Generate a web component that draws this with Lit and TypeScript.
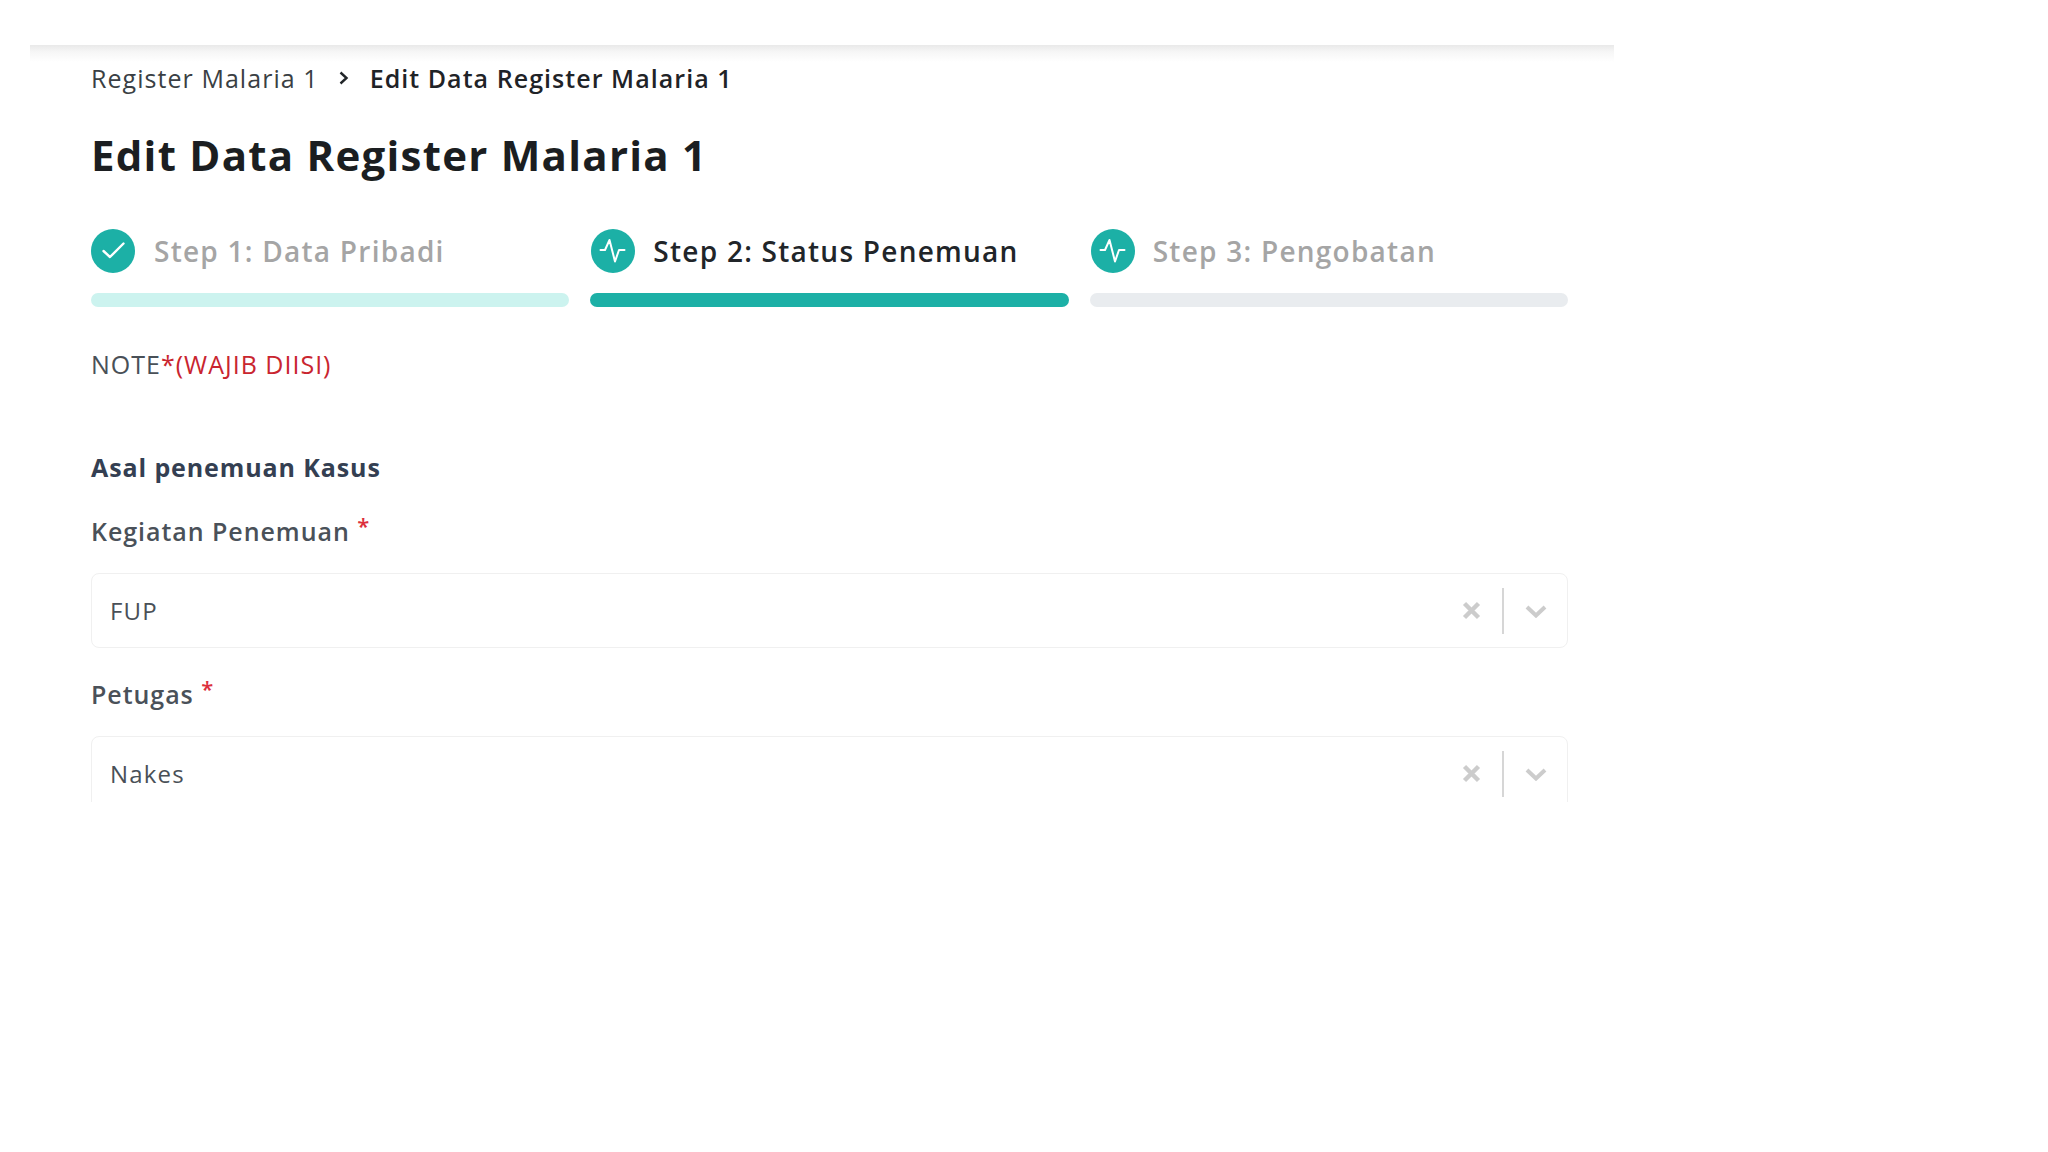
import { LitElement, html, css, svg } from "lit";
import { customElement } from "lit/decorators.js";

const check = svg`<path d="M-9.5 0 L-3 6 L10.5 -7.5" fill="none" stroke="#fff" stroke-width="2.4" stroke-linecap="round" stroke-linejoin="round"/>`;
const pulse = svg`<path d="M-12.5 -1 H-8 L-3.5 -11 L2 10.5 L6 -1 H11.5" fill="none" stroke="#fff" stroke-width="2" stroke-linecap="round" stroke-linejoin="round"/>`;

@customElement("app-root")
export class AppRoot extends LitElement {
  static styles = css`
    :host { display: block; width: 2048px; height: 1152px; background: #fff; font-family: "Open Sans", sans-serif; overflow: hidden; }
    .card { box-sizing: border-box; width: 1584px; height: 757px; margin: 45px 0 0 30px; padding: 16px 46px 0 61px; overflow: hidden;
      background: linear-gradient(#e9e9e9, #f6f6f6 40%, #ffffff) no-repeat top left / 100% 17px; }
    .crumbs { display: flex; align-items: center; height: 34px; font-size: 25px; letter-spacing: 1.05px; color: #3a3f44; }
    .crumbs svg { margin: 0 20px 0 19px; }
    .crumbs b { font-weight: 600; color: #1f2327; }
    h1 { margin: 30px 0 0; font-size: 42px; line-height: 60px; font-weight: 700; letter-spacing: 1.25px; color: #1b1e21; }
    .steps { display: grid; grid-template-columns: repeat(3, 1fr); column-gap: 21px; margin-top: 44px; }
    .step { display: flex; flex-direction: column; }
    .head { display: flex; align-items: center; height: 44px; gap: 19px; font-size: 28px; font-weight: 600; letter-spacing: 1.25px; color: #a5a5a5; }
    .head.on { color: #212529; }
    .step:nth-child(2) .head { gap: 18px; }
    .step:nth-child(2) .dot { margin-left: 1px; }
    .step:nth-child(3) .head { gap: 18px; }
    .step:nth-child(3) .dot { margin-left: 1px; }
    .dot { flex: none; width: 44px; height: 44px; border-radius: 50%; background: #1cb0a6; }
    .dot svg { display: block; }
    .bar { height: 14px; margin-top: 20px; border-radius: 7px; background: #ccf3ef; }
    .bar.on { background: #1cb0a6; }
    .bar.off { background: #e9ecef; }
    .note { margin-top: 39px; font-size: 25px; line-height: 36px; letter-spacing: 1px; color: #495057; }
    .note span { color: #c9252f; }
    h2 { margin: 67px 0 0; font-size: 25px; line-height: 36px; font-weight: 700; letter-spacing: 0.9px; color: #343f52; }
    label { display: block; font-size: 25px; line-height: 36px; font-weight: 600; letter-spacing: 0.95px; color: #4a5159; }
    label.first { margin-top: 28px; }
    label.next { margin-top: 28px; }
    label i { position: relative; top: -7px; font-style: normal; font-size: 22px; line-height: 0; color: #dc2f3c; }
    .select { box-sizing: border-box; display: flex; align-items: center; height: 75px; margin-top: 24px; padding: 0 20px 0 18px; border: 1.5px solid #f0f0f0; border-radius: 8px; font-size: 24px; letter-spacing: 1.2px; color: #495057; }
    .select .val { flex: 1; }
    .select .sep { width: 2px; height: 46px; margin: 0 21px; background: #d6d6d6; }
    .select svg { display: block; flex: none; }
  `;

  private dot(icon: unknown) {
    return html`<span class="dot"><svg width="44" height="44" viewBox="-22 -22 44 44">${icon}</svg></span>`;
  }

  private select(value: string) {
    return html`<div class="select">
      <span class="val">${value}</span>
      <svg width="19" height="19" viewBox="0 0 19 19"><path d="M2.5 2.5 L16.5 16.5 M16.5 2.5 L2.5 16.5" fill="none" stroke="#cccccc" stroke-width="4.4"/></svg>
      <span class="sep"></span>
      <svg width="22" height="14" viewBox="0 0 22 14"><path d="M2 3 L11 11.5 L20 3" fill="none" stroke="#cccccc" stroke-width="4"/></svg>
    </div>`;
  }

  render() {
    return html`<div class="card">
      <div class="crumbs">Register Malaria 1
        <svg width="12" height="16" viewBox="0 0 12 16"><path d="M2.5 2.5 L8.5 8 L2.5 13.5" fill="none" stroke="#212529" stroke-width="2.4"/></svg>
        <b>Edit Data Register Malaria 1</b></div>
      <h1>Edit Data Register Malaria 1</h1>
      <div class="steps">
        <div class="step"><div class="head">${this.dot(check)}Step 1: Data Pribadi</div><div class="bar"></div></div>
        <div class="step"><div class="head on">${this.dot(pulse)}Step 2: Status Penemuan</div><div class="bar on"></div></div>
        <div class="step"><div class="head">${this.dot(pulse)}Step 3: Pengobatan</div><div class="bar off"></div></div>
      </div>
      <div class="note">NOTE<span>*(WAJIB DIISI)</span></div>
      <h2>Asal penemuan Kasus</h2>
      <label class="first">Kegiatan Penemuan <i>*</i></label>
      ${this.select("FUP")}
      <label class="next">Petugas <i>*</i></label>
      ${this.select("Nakes")}
    </div>`;
  }
}
